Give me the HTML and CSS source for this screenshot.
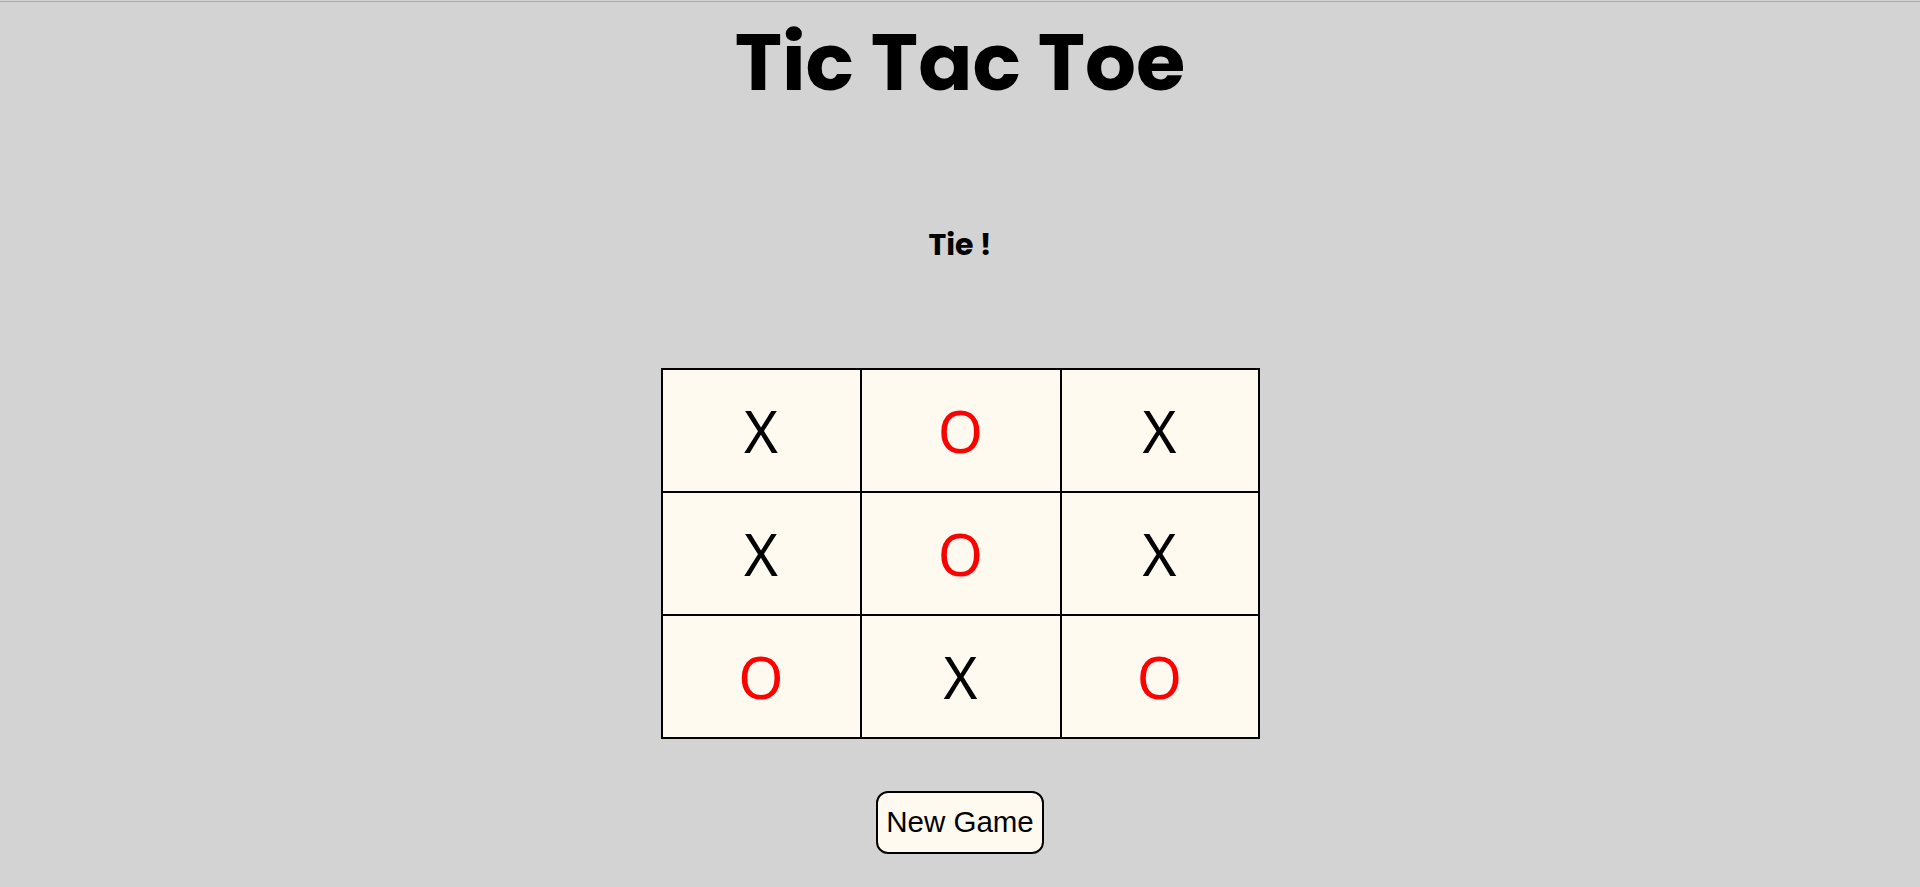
FILE: index.html
```html
<!DOCTYPE html>
<html lang="en">
<head>
<meta charset="utf-8">
<title>Tic Tac Toe</title>
<link rel="stylesheet" href="styles.css">
</head>
<body>
<div class="topline"></div>
<main class="app">
  <h1 class="title">Tic Tac Toe</h1>
  <p class="status">Tie !</p>
  <div class="board">
    <div class="cell x">X</div>
    <div class="cell o">O</div>
    <div class="cell x">X</div>
    <div class="cell x">X</div>
    <div class="cell o">O</div>
    <div class="cell x">X</div>
    <div class="cell o">O</div>
    <div class="cell x">X</div>
    <div class="cell o">O</div>
  </div>
  <button class="new-game">New Game</button>
</main>
</body>
</html>
```
FILE: styles.css
```css
html, body {
  margin: 0;
  padding: 0;
}
body {
  background: #d3d3d3;
  min-height: 887px;
  font-family: "Liberation Sans", Arial, sans-serif;
}
.topline {
  height: 1px;
  margin-top: 1px;
  background: #aaa9b3;
}
.app {
  display: flex;
  flex-direction: column;
  align-items: center;
}
.title {
  margin: 13px 0 0;
  font-family: "Poppins", "Inter", sans-serif;
  font-weight: 700;
  font-size: 80px;
  line-height: 94px;
  color: #000;
}
.status {
  margin: 119px 0 0;
  font-family: "Poppins", "Inter", sans-serif;
  font-weight: 700;
  font-size: 30px;
  line-height: 33px;
  color: #000;
}
.board {
  margin-top: 107px;
  display: grid;
  grid-template-columns: 197px 198px 196px;
  grid-template-rows: repeat(3, 121px);
  gap: 2px;
  background: #000;
  border: 2px solid #000;
}
.cell {
  background: #fffaf0;
  display: flex;
  align-items: center;
  justify-content: center;
  font-family: "Noto Sans", sans-serif;
  font-size: 58px;
  line-height: 1;
}
.cell.x { color: #000; }
.cell.o { color: #ff0000; }
.new-game {
  margin-top: 52px;
  font-family: "Liberation Sans", Arial, sans-serif;
  font-size: 29.5px;
  padding: 12px 8px 13px;
  background: #fffaf0;
  color: #000;
  border: 2px solid #000;
  border-radius: 12px;
}
```
